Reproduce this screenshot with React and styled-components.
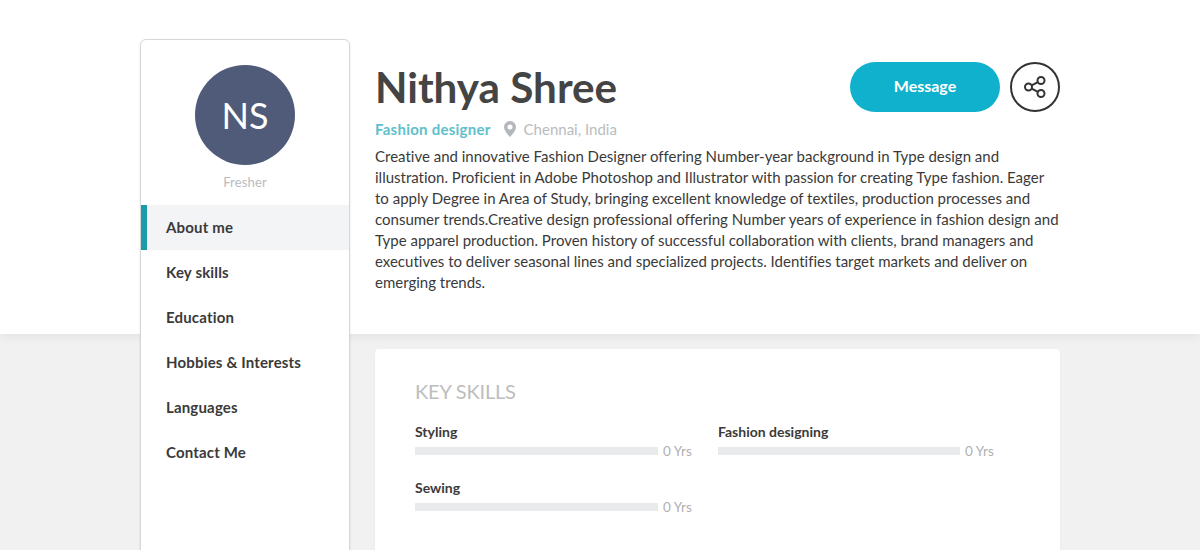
import React from "react";
import styled, { createGlobalStyle } from "styled-components";

const Global = createGlobalStyle`
  html, body { margin: 0; padding: 0; height: 100%; overflow: hidden; background: #f1f1f1; }
  body { font-family: Lato, "Liberation Sans", sans-serif; color: #333; font-variant-ligatures: none; }
  * { box-sizing: border-box; }
`;

const Page = styled.div`
  position: relative;
  height: 550px;
  overflow: hidden;
  display: flex;
  justify-content: center;
  padding-top: 39px;
  &::before {
    content: "";
    position: absolute;
    inset: 0 0 auto 0;
    height: 334px;
    background: #fff;
    box-shadow: 0 2px 10px rgba(0, 0, 0, 0.07);
  }
`;

const Shell = styled.div`
  position: relative;
  width: 920px;
  display: flex;
  gap: 25px;
  align-items: flex-start;
`;

const Sidebar = styled.aside`
  width: 210px;
  flex: none;
  height: 600px;
  background: #fff;
  border: 1px solid #d5d7da;
  border-radius: 6px;
  box-shadow: 0 1px 3px rgba(0, 0, 0, 0.08);
  padding-top: 25px;
`;

const Avatar = styled.div`
  width: 100px;
  height: 100px;
  margin: 0 auto;
  border-radius: 50%;
  background: #4f5b78;
  color: #fff;
  font-size: 36px;
  display: flex;
  align-items: center;
  justify-content: center;
`;

const Level = styled.div`
  margin-top: 9px;
  height: 16px;
  line-height: 16px;
  text-align: center;
  font-size: 13px;
  letter-spacing: 0.15px;
  color: #b9bcc0;
`;

const Nav = styled.nav`
  margin-top: 15px;
`;

const NavItem = styled.div`
  height: 45px;
  line-height: 45px;
  padding-left: ${(p) => (p.$active ? "19px" : "25px")};
  font-size: 15px;
  font-weight: 700;
  letter-spacing: 0.17px;
  color: #3a3a3a;
  background: ${(p) => (p.$active ? "#f3f4f6" : "transparent")};
  border-left: ${(p) => (p.$active ? "6px solid #1a9bab" : "none")};
`;

const Main = styled.main`
  flex: 1;
  min-width: 0;
`;

const Intro = styled.section`
  height: 310px;
  padding-top: 23px;
`;

const TopRow = styled.div`
  display: flex;
  justify-content: space-between;
  align-items: flex-start;
`;

const Name = styled.h1`
  margin: 0;
  font-size: 42.200px;
  line-height: 50px;
  font-weight: 700;
  color: #444;
`;

const Actions = styled.div`
  display: flex;
  gap: 10px;
`;

const MessageButton = styled.button`
  width: 150px;
  height: 50px;
  border: 0;
  padding: 0 0 3px;
  border-radius: 25px;
  background: #0fb1cc;
  color: #fff;
  font: 700 16px Lato, sans-serif;
`;

const ShareButton = styled.button`
  width: 50px;
  height: 50px;
  padding: 0;
  border: 2px solid #333;
  border-radius: 50%;
  background: #fff;
  color: #333;
  display: flex;
  align-items: center;
  justify-content: center;
`;

const Meta = styled.div`
  display: flex;
  align-items: center;
  height: 20px;
  margin-top: 7px;
  font-size: 15px;
`;

const Role = styled.span`
  font-weight: 700;
  letter-spacing: 0.25px;
  color: #5fc0cc;
`;

const Location = styled.span`
  display: flex;
  align-items: center;
  margin-left: 13px;
  gap: 8px;
  color: #b9bcc0;
`;

const Bio = styled.p`
  margin: 7px 0 0;
  font-size: 15px;
  line-height: 21px;
  color: #3a3a3a;
`;

const Card = styled.section`
  background: #fff;
  border-radius: 4px;
  padding: 29px 40px;
  height: 220px;
  box-shadow: 0 1px 3px rgba(0, 0, 0, 0.04);
`;

const CardTitle = styled.h2`
  margin: 0;
  font-size: 20px;
  line-height: 26px;
  font-weight: 400;
  color: #bdbdbd;
  letter-spacing: -0.2px;
`;

const SkillGrid = styled.div`
  margin-top: 19px;
  display: grid;
  grid-template-columns: 277px 276px;
  column-gap: 26px;
  row-gap: 18px;
`;

const Skill = styled.div``;

const SkillName = styled.div`
  font-size: 14px;
  line-height: 18px;
  font-weight: 700;
  color: #3a3a3a;
`;

const SkillRow = styled.div`
  display: flex;
  align-items: center;
  height: 20px;
  gap: 5px;
`;

const Track = styled.div`
  flex: 1;
  height: 8px;
  background: #e9eaec;
`;

const Years = styled.span`
  font-size: 13.500px;
  color: #b0b0b0;
  width: 29px;
  white-space: nowrap;
`;

const Pin = () => (
  <svg width="12" height="16" viewBox="0 0 12 16" aria-hidden="true">
    <path
      fillRule="evenodd"
      fill="#b4b7bb"
      d="M6 0a6 6 0 0 1 6 6c0 3.600-3.800 7.600-6 10-2.200-2.400-6-6.400-6-10a6 6 0 0 1 6-6zm0 3.500a2.500 2.500 0 1 0 0 5 2.500 2.500 0 0 0 0-5z"
    />
  </svg>
);

const ShareIcon = () => (
  <svg width="24" height="24" viewBox="0 0 24 24" fill="none" stroke="currentColor" strokeWidth="2" aria-hidden="true">
    <circle cx="18" cy="5.500" r="3.500" />
    <circle cx="5.500" cy="12" r="3.500" />
    <circle cx="18" cy="18.500" r="3.500" />
    <path d="M8.600 10.300l6.300-3.200M8.600 13.700l6.300 3.200" />
  </svg>
);

const navItems = ["About me", "Key skills", "Education", "Hobbies & Interests", "Languages", "Contact Me"];
const skills = ["Styling", "Fashion designing", "Sewing"];

export default function App() {
  return (
    <Page>
      <Global />
      <Shell>
        <Sidebar>
          <Avatar>NS</Avatar>
          <Level>Fresher</Level>
          <Nav>
            {navItems.map((item, i) => (
              <NavItem key={item} $active={i === 0}>{item}</NavItem>
            ))}
          </Nav>
        </Sidebar>
        <Main>
          <Intro>
            <TopRow>
              <Name>Nithya Shree</Name>
              <Actions>
                <MessageButton>Message</MessageButton>
                <ShareButton aria-label="Share"><ShareIcon /></ShareButton>
              </Actions>
            </TopRow>
            <Meta>
              <Role>Fashion designer</Role>
              <Location><Pin />Chennai, India</Location>
            </Meta>
            <Bio>
              Creative and innovative Fashion Designer offering Number-year background in Type design and illustration. Proficient in Adobe Photoshop and Illustrator with passion for creating Type fashion. Eager to apply Degree in Area of Study, bringing excellent knowledge of textiles, production processes and consumer trends.Creative design professional offering Number years of experience in fashion design and Type apparel production. Proven history of successful collaboration with clients, brand managers and executives to deliver seasonal lines and specialized projects. Identifies target markets and deliver on emerging trends.
            </Bio>
          </Intro>
          <Card>
            <CardTitle>KEY SKILLS</CardTitle>
            <SkillGrid>
              {skills.map((s) => (
                <Skill key={s}>
                  <SkillName>{s}</SkillName>
                  <SkillRow>
                    <Track />
                    <Years>0 Yrs</Years>
                  </SkillRow>
                </Skill>
              ))}
            </SkillGrid>
          </Card>
        </Main>
      </Shell>
    </Page>
  );
}
